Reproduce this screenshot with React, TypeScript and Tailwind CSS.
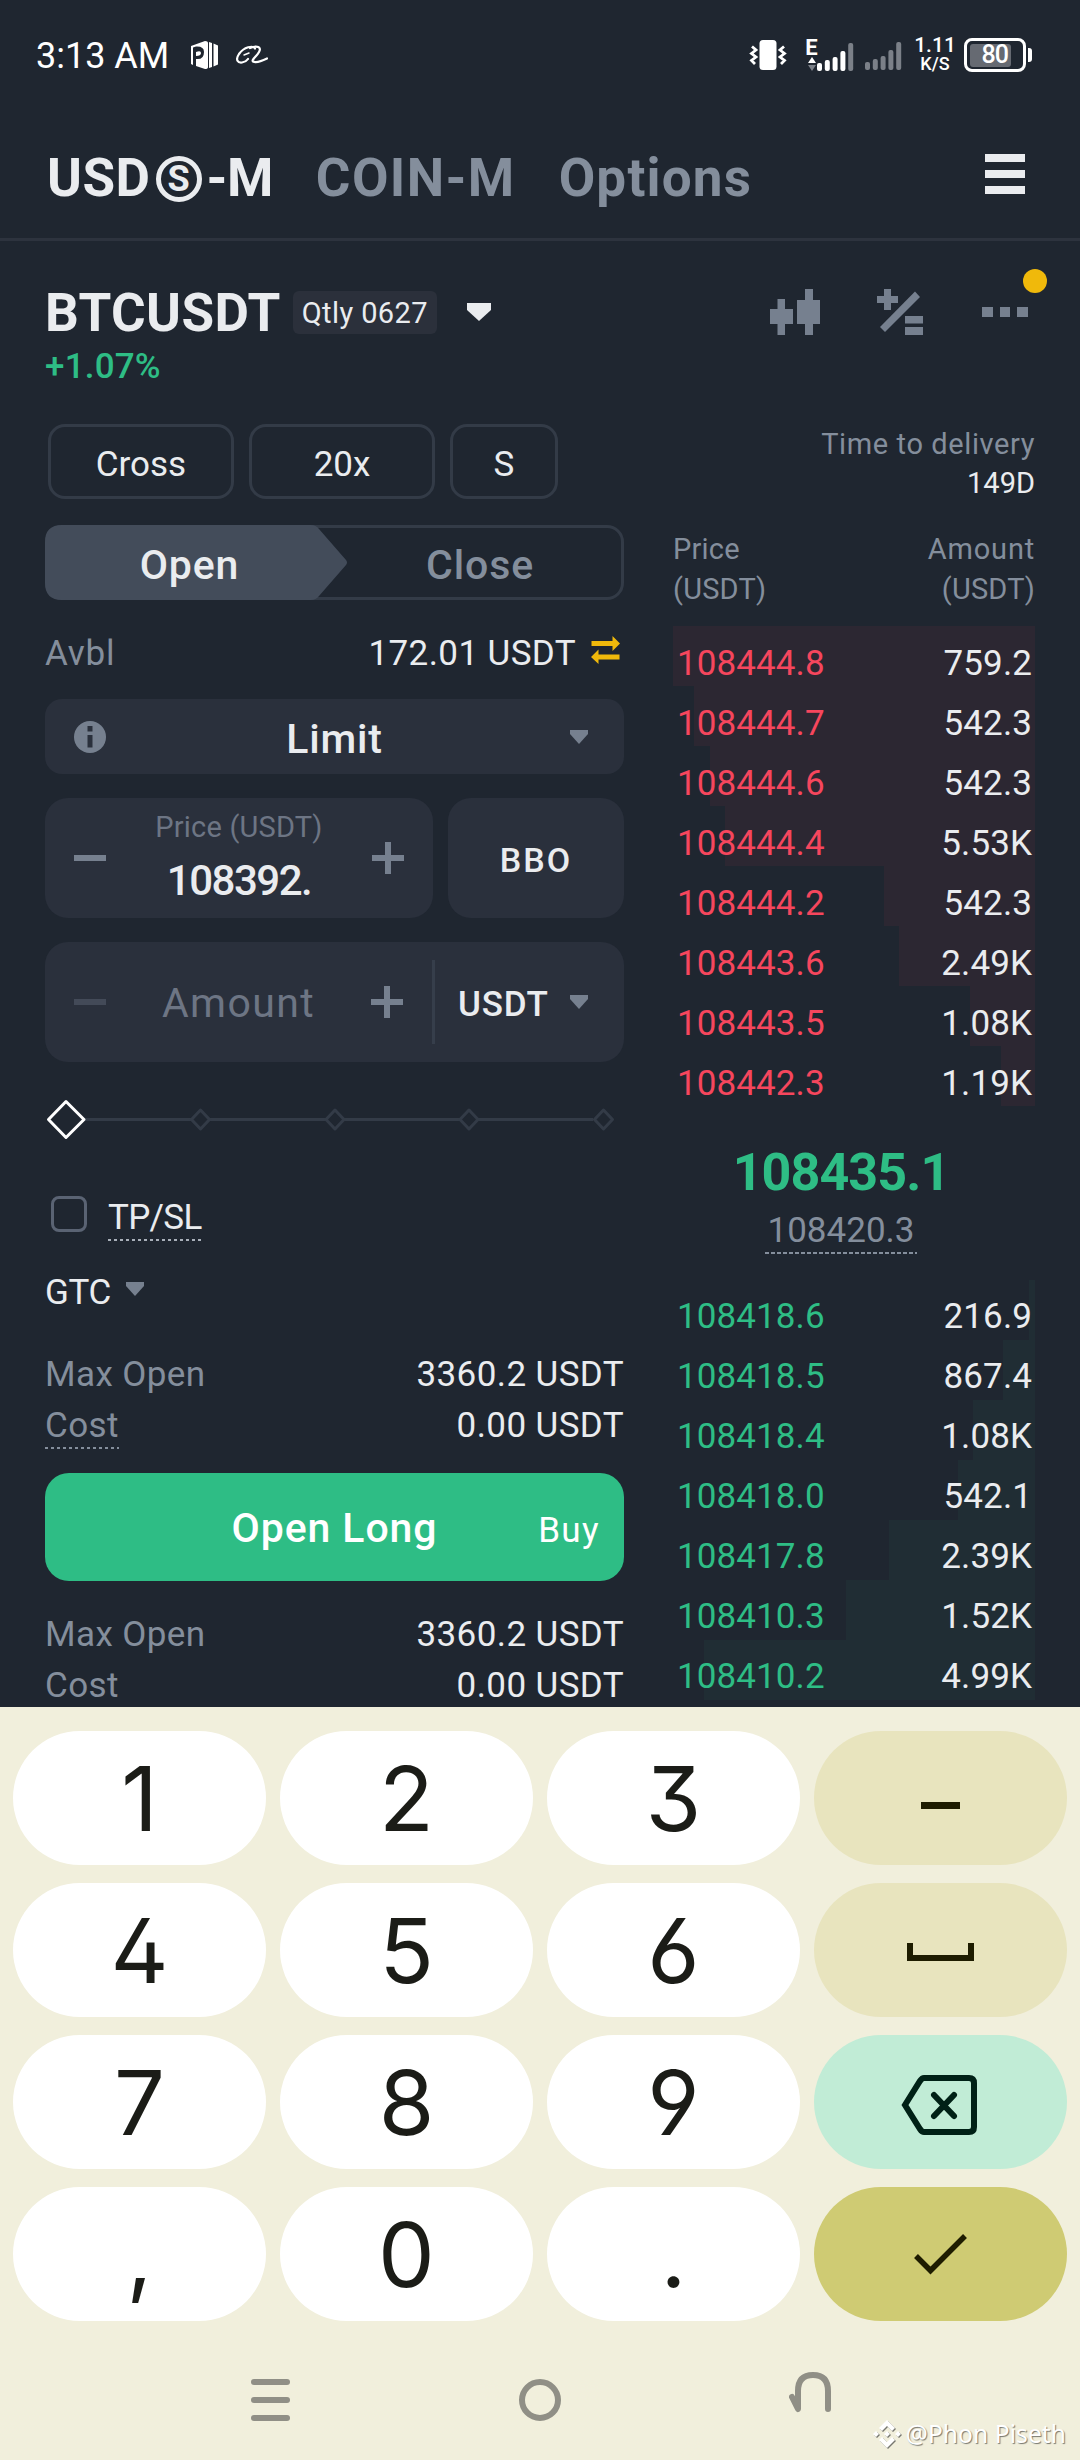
import clsx from 'clsx';

interface Order {
  price: string;
  amount: string;
  depth: number; // bar width in px
}

const asks: Order[] = [
  { price: '108444.8', amount: '759.2', depth: 362 },
  { price: '108444.7', amount: '542.3', depth: 341 },
  { price: '108444.6', amount: '542.3', depth: 325 },
  { price: '108444.4', amount: '5.53K', depth: 310 },
  { price: '108444.2', amount: '542.3', depth: 151 },
  { price: '108443.6', amount: '2.49K', depth: 136 },
  { price: '108443.5', amount: '1.08K', depth: 65 },
  { price: '108442.3', amount: '1.19K', depth: 34 },
];

const bids: Order[] = [
  { price: '108418.6', amount: '216.9', depth: 6 },
  { price: '108418.5', amount: '867.4', depth: 32 },
  { price: '108418.4', amount: '1.08K', depth: 62 },
  { price: '108418.0', amount: '542.1', depth: 77 },
  { price: '108417.8', amount: '2.39K', depth: 146 },
  { price: '108410.3', amount: '1.52K', depth: 189 },
  { price: '108410.2', amount: '4.99K', depth: 331 },
];

const SignalBars = ({ level }: { level: number }) => (
  <svg className="h-[28px] w-[37px]" viewBox="0 0 37 28">
    {[8, 11, 14, 20, 28].map((h, i) => (
      <rect
        key={h}
        x={i * 7.8}
        y={28 - h}
        width={5}
        height={h}
        rx={2}
        fill={i < level ? '#ffffff' : '#7b8088'}
      />
    ))}
  </svg>
);

const StatusBar = () => (
  <div className="flex h-[110px] shrink-0 items-center pr-[48px] pl-[36px] text-white">
    <div className="pt-px text-[36px]">3:13 AM</div>
    <svg className="ml-[22px] h-[28px] w-[28px]" viewBox="0 0 28 28" fill="#fff">
      <path
        fillRule="evenodd"
        d="M0 5 L14 0 Q17 0 17 2 V26 Q17 28 14 28 L5 25 V18 Q13 19 13 11 Q13 5 5 5.500 L2 6.500 V24 L0 23 Z"
      />
      <path d="M5 11 Q10 9 10 12 Q10 15 5 15 Z" />
      <path d="M18 1 L21 2 V26 L18 27 Z M22.500 2.500 L27 4.500 V23.500 L22.500 25.500 Z" />
    </svg>
    <svg
      className="ml-[17px] h-[20px] w-[32px]"
      viewBox="0 0 32 20"
      fill="none"
      stroke="#fff"
      strokeLinecap="round"
    >
      <path
        strokeWidth={2.200}
        d="M19 3.500 C17 0 8 2 3 9 C-1 15 2 18 6 17.500 C9 17 11 15.500 12 14"
      />
      <path
        strokeWidth={2.200}
        d="M14 3 C21 0 26 2 23 7 C21 11 15 15 17 16.500 C20 18 26 16 31 13.500"
      />
      <path strokeWidth={1.500} d="M8 10 L13 8" />
    </svg>

    <svg
      className="ml-auto h-[32px] w-[38px]"
      viewBox="0 0 38 32"
      fill="none"
      stroke="#fff"
      strokeWidth={2.800}
    >
      <rect x={10.500} y={1} width={17} height={30} rx={3.500} fill="#fff" stroke="none" />
      <path d="M3 7.500 L7 11 L2.500 14.500 L7 18 L2.500 21.500 L6 25 M35 7.500 L31 11 L35.500 14.500 L31 18 L35.500 21.500 L32 25" />
    </svg>
    <div className="ml-[19px] flex items-end">
      <div className="flex w-[11px] flex-col items-center">
        <div className="text-[22px] leading-[18px] font-bold">E</div>
        <svg className="h-[14px] w-[8px]" viewBox="0 0 8 14">
          <path d="M4 0 L8 6 H0 Z" fill="#fff" />
          <path d="M4 14 L8 8 H0 Z" fill="#7b8088" />
        </svg>
      </div>
      <SignalBars level={4} />
    </div>
    <div className="ml-[11px] pt-[2px]">
      <SignalBars level={0} />
    </div>
    <div className="ml-[14px] flex w-[38px] flex-col items-center font-medium">
      <div className="text-[21px] leading-[18px]">1.11</div>
      <div className="text-[18px] leading-[20px]">K/S</div>
    </div>
    <div className="ml-[10px] flex h-[34px] w-[62px] items-center rounded-[8px] border-[3px] border-white p-[3px]">
      <div className="flex h-[23px] w-[41px] items-center justify-end rounded-[3px] bg-[#666a72] pr-[3px] text-[25px] font-medium tracking-[-1px]">
        80
      </div>
    </div>
    <div className="ml-[2px] h-[14px] w-[4px] rounded-r-[3px] bg-white" />
  </div>
);

const Tabs = () => (
  <div className="flex h-[131px] shrink-0 items-center border-b-[3px] border-[#2d333e] pr-[55px] pl-[47px] text-[53px] font-bold text-[#848e9c]">
    <div className="flex items-center pt-[10px] text-[#eaecef]">
      <span className="tracking-[0.5px]">USD</span>
      <span className="mr-[5px] ml-[5px] flex h-[46px] w-[46px] items-center justify-center rounded-full border-[5px] border-[#eaecef] text-[36px]">
        S
      </span>
      <span className="tracking-[-0.5px]">-M</span>
    </div>
    <div className="ml-[43px] pt-[10px] tracking-[1.4px]">COIN-M</div>
    <div className="ml-[43px] pt-[10px] tracking-[1.2px]">Options</div>
    <div className="ml-auto flex w-[40px] flex-col gap-2">
      <div className="h-2 bg-[#eaecef]" />
      <div className="h-2 bg-[#eaecef]" />
      <div className="h-2 bg-[#eaecef]" />
    </div>
  </div>
);

const Caret = ({ className }: { className?: string }) => (
  <svg
    className={clsx('h-[14px] w-[18px] shrink-0 text-[#76808f]', className)}
    viewBox="0 0 18 14"
    fill="currentColor"
  >
    <path d="M0 0 H18 V4 L9 14 L0 4 Z" />
  </svg>
);

const SymbolHeader = () => (
  <div className="mt-[37px] shrink-0 pr-[45px] pl-[45px]">
    <div className="flex h-[68px] items-center">
      <div className="pt-[3px] text-[53px] font-bold tracking-[0.4px] text-[#eaecef]">BTCUSDT</div>
      <div className="ml-[12px] flex h-[43px] w-[144px] items-center justify-center rounded-[6px] bg-[#2b303b] pt-[4px] text-[29px] tracking-[0.4px] text-[#eaecef]">
        Qtly 0627
      </div>
      <svg
        className="ml-[30px] h-[18px] w-[24px] text-[#eaecef]"
        viewBox="0 0 24 18"
        fill="currentColor"
      >
        <path d="M0 0 H24 V7 L12 18 L0 7 Z" />
      </svg>

      <div className="ml-auto flex items-center text-[#76808f]">
        <svg className="h-[46px] w-[50px]" viewBox="0 0 50 46" fill="currentColor">
          <path d="M7.500 10 H15 V20 H23 V35 H15 V46 H7.500 V35 H0 V20 H7.500 Z" />
          <path d="M35 0 H43 V11 H50 V35 H43 V46 H35 V35 H27 V11 H35 Z" />
        </svg>
        <svg className="ml-[57px] h-[46px] w-[46px]" viewBox="0 0 46 46" fill="currentColor">
          <path d="M7 0 H14 V7 H21 V14 H14 V21 H7 V14 H0 V7 H7 Z" />
          <path d="M38 2.500 L43 8 L8 43 L3 38 Z" />
          <path d="M28 27 H46 V34.500 H28 Z M28 38 H46 V46 H28 Z" />
        </svg>
        <div className="relative ml-[59px] flex w-[53px] gap-[7px]">
          <div className="h-[10px] w-[10.5px] bg-current" />
          <div className="h-[10px] w-[10.5px] bg-current" />
          <div className="h-[10px] w-[10.5px] bg-current" />
          <div className="absolute -top-[38px] right-[-12px] h-[24px] w-[24px] rounded-full bg-[#f0b90b]" />
        </div>
      </div>
    </div>
    <div className="flex h-[39px] items-center pt-[4px] text-[35px] font-medium tracking-[0.2px] text-[#2ebd85]">
      +1.07%
    </div>
  </div>
);

const Minus = ({ className }: { className?: string }) => (
  <svg className={clsx('h-[32px] w-[32px]', className)} viewBox="0 0 32 32" fill="currentColor">
    <path d="M0 13 H32 V19 H0 Z" />
  </svg>
);

const Plus = () => (
  <svg className="h-[32px] w-[32px] text-[#76808f]" viewBox="0 0 32 32" fill="currentColor">
    <path d="M13 0 H19 V13 H32 V19 H19 V32 H13 V19 H0 V13 H13 Z" />
  </svg>
);

const Slider = () => (
  <svg className="h-[115px] w-[579px] shrink-0" viewBox="0 0 579 115" fill="none">
    <path d="M40 57.500 H548" stroke="#333b47" strokeWidth={3} />
    {[155.5, 290, 424, 558.5].map((x) => (
      <path
        key={x}
        d={`M${x - 9} 57.500 L${x} 48 L${x + 9} 57.500 L${x} 67 Z`}
        fill="#1f2630"
        stroke="#333b47"
        strokeWidth={3}
        strokeLinejoin="round"
      />
    ))}
    <path
      d="M3.500 57.500 L21 39.500 L39 57.500 L21 75.500 Z"
      fill="#1f2630"
      stroke="#fff"
      strokeWidth={3}
      strokeLinejoin="round"
    />
  </svg>
);

const Summary = () => (
  <div className="text-[35px] tracking-[0.4px] text-[#eaecef]">
    <div className="flex h-[51px] items-center justify-between pt-[3px]">
      <span className="text-[#848e9c]">Max Open</span>
      <span>3360.2 USDT</span>
    </div>
    <div className="flex h-[51px] items-center justify-between pt-[3px]">
      <span className="relative text-[#848e9c]">
        Cost
        <span className="absolute bottom-[3px] left-0 h-[2px] w-full bg-[repeating-linear-gradient(90deg,#848e9c_0_3px,transparent_3px_6px)]" />
      </span>
      <span>0.00 USDT</span>
    </div>
  </div>
);

const OrderForm = () => (
  <div className="flex w-[579px] flex-col text-[35px] text-[#eaecef]">
    <div className="mt-[39px] flex gap-[15px] pl-[3px]">
      <div className="flex h-[75px] w-[186px] items-center justify-center rounded-[17px] border-[3px] border-[#333b47] pt-2">
        Cross
      </div>
      <div className="flex h-[75px] w-[186px] items-center justify-center rounded-[17px] border-[3px] border-[#333b47] pt-2">
        20x
      </div>
      <div className="flex h-[75px] w-[108px] items-center justify-center rounded-[17px] border-[3px] border-[#333b47] pt-2">
        S
      </div>
    </div>

    <div className="relative mt-[26px] flex h-[75px] shrink-0 items-center rounded-[17px] border-[3px] border-[#333b47] pt-1.5 text-[41px] font-medium tracking-[0.9px]">
      <svg
        className="absolute -top-[3px] -left-[3px] h-[75px] w-[303px]"
        viewBox="0 0 303 75"
        fill="#434c5a"
      >
        <path d="M17 0 H266 Q271 0 274 4 L301 35 Q303 37.500 301 40 L274 71 Q271 75 266 75 H17 Q0 75 0 58 V17 Q0 0 17 0 Z" />
      </svg>
      <div className="relative w-[286px] pr-[3px] text-center">Open</div>
      <div className="flex-1 pl-[5px] text-center text-[#848e9c]">Close</div>
    </div>

    <div className="flex h-[99px] shrink-0 items-center">
      <span className="pt-[9px] tracking-[0.8px] text-[#848e9c]">Avbl</span>
      <span className="ml-auto pt-[9px] tracking-[0.4px]">172.01 USDT</span>
      <svg
        className="mr-[4px] ml-[15px] h-[28px] w-[29px]"
        viewBox="0 0 29 28"
        fill="#f0b90b"
      >
        <path d="M0.500 5 H21.500 V0 L29 7.500 L21.500 15 V10 H0.500 Z" />
        <path d="M28.500 18.500 H7.500 V13.500 L0 21 L7.500 28 V23.500 H28.500 Z" />
      </svg>
    </div>

    <div className="flex h-[75px] shrink-0 items-center justify-between rounded-[17px] bg-[#2a303c] pr-[36px] pl-[29px]">
      <svg className="h-[32px] w-[32px]" viewBox="0 0 32 32">
        <circle cx={16} cy={16} r={16} fill="#76808f" />
        <path d="M13.500 5 H18.500 V10.500 H13.500 Z M13.500 14 H18.500 V26.500 H13.500 Z" fill="#2a303c" />
      </svg>
      <div className="mr-[7px] pt-1.5 text-[41px] font-medium tracking-[0.8px]">Limit</div>
      <Caret />
    </div>

    <div className="mt-6 flex shrink-0 gap-[15px]">
      <div className="flex h-[120px] w-[388px] items-center justify-between rounded-[23px] bg-[#2a303c] px-[29px]">
        <Minus className="text-[#76808f]" />
        <div className="flex flex-col items-center">
          <div className="pt-[4px] text-[29px] leading-[50px] tracking-[0.2px] text-[#6d7584]">
            Price (USDT)
          </div>
          <div className="pb-[9px] text-[42px] leading-[57px] font-medium tracking-[-1.5px]">
            108392.
          </div>
        </div>
        <Plus />
      </div>
      <div className="flex h-[120px] flex-1 items-center justify-center rounded-[23px] bg-[#2a303c] pt-1 text-[34px] font-medium tracking-[2px]">
        BBO
      </div>
    </div>

    <div className="mt-6 flex h-[120px] shrink-0 items-center rounded-[23px] bg-[#2a303c]">
      <div className="flex w-[387px] items-center justify-between px-[29px]">
        <Minus className="text-[#434a58]" />
        <div className="pt-[3px] text-[41px] tracking-[1.4px] text-[#6d7584]">Amount</div>
        <Plus />
      </div>
      <div className="h-[84px] w-[3px] bg-[#363e4b]" />
      <div className="flex flex-1 items-center justify-between pr-[36px] pl-[23px]">
        <span className="pt-1.5 font-medium tracking-[0.8px]">USDT</span>
        <Caret />
      </div>
    </div>

    <Slider />

    <div className="flex h-[74px] shrink-0 items-center">
      <div className="ml-[6px] h-[36px] w-[36px] rounded-[8px] border-[3px] border-[#5a6373]" />
      <div className="relative ml-[21px] pt-[8px] tracking-[-0.7px]">
        TP/SL
        <span className="absolute bottom-[3px] left-0 h-[2px] w-full bg-[repeating-linear-gradient(90deg,#a9b0ba_0_3px,transparent_3px_6px)]" />
      </div>
    </div>

    <div className="flex h-[84px] shrink-0 items-center">
      <span className="pt-px tracking-[-0.4px]">GTC</span>
      <Caret className="mb-[8px] ml-[15px]" />
    </div>

    <div className="mt-[13px]">
      <Summary />
    </div>
    <div className="relative mt-[23px] flex h-[108px] shrink-0 items-center justify-center rounded-[24px] bg-[#2ebd85] pt-[4px] text-[41px] font-medium tracking-[0.9px] text-white">
      Open Long
      <span className="absolute right-[24px] pt-[5px] text-[35px] font-normal tracking-[1.4px]">
        Buy
      </span>
    </div>
    <div className="mt-[27px]">
      <Summary />
    </div>
  </div>
);

const OrderRow = ({ order, side }: { order: Order; side: 'ask' | 'bid' }) => (
  <div
    className={clsx(
      'relative flex h-[60px] items-center justify-between pr-[3px] pl-[4px] text-[35px] tracking-[0.1px]',
      side === 'ask' ? 'pt-[16px]' : 'pt-[14px]'
    )}
  >
    <div
      className={clsx(
        'absolute top-0 right-0 h-[60px]',
        side === 'ask' ? 'bg-[#2c2732]' : 'bg-[#202d34]'
      )}
      style={{ width: order.depth }}
    />
    <span className={clsx('relative', side === 'ask' ? 'text-[#f6465d]' : 'text-[#2ebd85]')}>
      {order.price}
    </span>
    <span className="relative text-[#eaecef]">{order.amount}</span>
  </div>
);

const OrderBook = () => (
  <div className="mr-[45px] ml-auto flex w-[362px] flex-col">
    <div className="mt-[39px] text-right text-[29px] leading-10">
      <div className="tracking-[0.6px] text-[#848e9c]">Time to delivery</div>
      <div className="-mt-px mb-px text-[#eaecef]">149D</div>
    </div>
    <div className="mt-[25px] flex justify-between text-[29px] leading-10 tracking-[0.2px] text-[#848e9c]">
      <div>
        Price
        <br />
        (USDT)
      </div>
      <div className="text-right">
        <span className="tracking-[0.8px]">Amount</span>
        <br />
        (USDT)
      </div>
    </div>
    <div className="mt-[17px]">
      {asks.map((order) => (
        <OrderRow key={order.price} order={order} side="ask" />
      ))}
    </div>
    <div className="mt-[35px] flex h-[60px] shrink-0 items-center justify-center pt-[3px] pr-[26px] text-[52px] font-bold tracking-[-0.9px] text-[#2ebd85]">
      108435.1
    </div>
    <div className="flex h-[57px] shrink-0 items-center justify-center pt-[3px] pr-[26px] text-[35px] text-[#848e9c]">
      <span className="relative">
        108420.3
        <span className="absolute bottom-[3px] left-[-3px] h-[2px] w-[152px] bg-[repeating-linear-gradient(90deg,#848e9c_0_4px,transparent_4px_6px)]" />
      </span>
    </div>
    <div className="mt-[22px]">
      {bids.map((order) => (
        <OrderRow key={order.price} order={order} side="bid" />
      ))}
    </div>
  </div>
);

const Key = ({ children, className }: { children: React.ReactNode; className?: string }) => (
  <div
    className={clsx(
      'flex h-[134px] items-center justify-center rounded-full',
      className ?? 'bg-white'
    )}
  >
    {children}
  </div>
);

const Keyboard = () => (
  <div className="h-[753px] shrink-0 bg-[#f1efdc] pt-6">
    <div className="grid grid-cols-4 gap-x-[14px] gap-y-[18px] px-[13px] font-['Inter',sans-serif] text-[90px] text-[#1b1c17] [font-feature-settings:'ss01']">
      <Key>1</Key>
      <Key>2</Key>
      <Key>3</Key>
      <Key className="bg-[#e8e4be]">
        <div className="mt-[15px] h-[7px] w-[39px] bg-[#1e1c00]" />
      </Key>
      <Key>4</Key>
      <Key>5</Key>
      <Key>6</Key>
      <Key className="bg-[#e8e4be]">
        <svg className="mt-[4px] h-[18px] w-[67px]" viewBox="0 0 67 18" fill="none">
          <path d="M3 0 V15 H64 V0" stroke="#1e1c00" strokeWidth={6} />
        </svg>
      </Key>
      <Key>7</Key>
      <Key>8</Key>
      <Key>9</Key>
      <Key className="bg-[#c1ecd6]">
        <svg
          className="mt-[5px] mr-[3px] h-[60px] w-[76px]"
          viewBox="0 0 76 60"
          fill="none"
          stroke="#002116"
          strokeWidth={6}
        >
          <path d="M23 3 H68 Q73 3 73 8 V52 Q73 57 68 57 H23 Q21 57 19 54 L4 30 L19 6 Q21 3 23 3 Z" />
          <path d="M33 20 L53 41 M53 20 L33 41" strokeLinecap="round" />
        </svg>
      </Key>
      <Key>,</Key>
      <Key>0</Key>
      <Key>.</Key>
      <Key className="bg-[#cfcb73]">
        <svg className="h-[41px] w-[53px]" viewBox="0 0 53 41" fill="none">
          <path d="M2 22 L16.500 36.500 L51 2" stroke="#1e1c00" strokeWidth={5.500} />
        </svg>
      </Key>
    </div>

    <div className="relative mt-[49px] flex h-[60px] items-center justify-between px-[249px]">
      <div className="flex w-[42px] flex-col items-center gap-3">
        <div className="h-1.5 w-[39px] rounded-full bg-[#908f86]" />
        <div className="h-1.5 w-[39px] rounded-full bg-[#908f86]" />
        <div className="h-1.5 w-[39px] rounded-full bg-[#908f86]" />
      </div>
      <div className="h-[42px] w-[42px] rounded-full border-[6px] border-[#908f86]" />
      <svg
        className="mb-[16px] h-[42px] w-[42px]"
        viewBox="0 0 42 42"
        fill="none"
        stroke="#908f86"
        strokeWidth={6}
        strokeLinecap="round"
        strokeLinejoin="round"
      >
        <path d="M3 26 L9 38 V20 Q9 4 24 4 Q39 4 39 20 V38" />
      </svg>
      <div className="absolute top-[48px] right-[14px] flex items-center gap-[5px] font-['Noto_Sans',sans-serif] text-[24.5px] leading-[32px] tracking-[0.1px] text-white [text-shadow:1px_1px_1px_#77776f]">
        <svg
          className="h-[28px] w-[28px] drop-shadow-[1px_1px_0.5px_#77776f]"
          viewBox="0 0 28 28"
          fill="#fff"
        >
          <path d="M14 0 L22 8 L19 11 L14 6 L9 11 L6 8 Z" />
          <path d="M14 28 L22 20 L19 17 L14 22 L9 17 L6 20 Z" />
          <path d="M3 11 L6 14 L3 17 L0 14 Z M25 11 L28 14 L25 17 L22 14 Z M14 11 L17 14 L14 17 L11 14 Z" />
        </svg>
        @Phon Piseth
      </div>
    </div>
  </div>
);

export default function App() {
  return (
    <div className="flex h-[2460px] w-[1080px] flex-col overflow-hidden bg-[#1f2630] font-['Roboto',sans-serif]">
      <StatusBar />
      <Tabs />
      <SymbolHeader />
      <div className="flex h-[1322px] shrink-0 overflow-hidden pl-[45px]">
        <OrderForm />
        <OrderBook />
      </div>
      <Keyboard />
    </div>
  );
}
